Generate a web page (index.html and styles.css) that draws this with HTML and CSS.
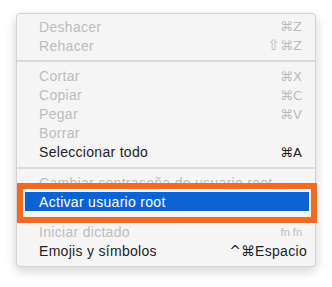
FILE: index.html
```html
<!DOCTYPE html>
<html>

<head>
    <link rel="stylesheet" href="styles.css">
</head>

<body>
    <div class="stage">
        <div class="menu">
            <div class="item disabled"><span>Deshacer</span><span class="key">⌘Z</span></div>
            <div class="item disabled"><span>Rehacer</span><span class="key"><span class="shift">⇧</span>⌘Z</span></div>
            <div class="sep"></div>
            <div class="item disabled"><span>Cortar</span><span class="key">⌘X</span></div>
            <div class="item disabled"><span>Copiar</span><span class="key">⌘C</span></div>
            <div class="item disabled"><span>Pegar</span><span class="key">⌘V</span></div>
            <div class="item disabled"><span>Borrar</span></div>
            <div class="item"><span>Seleccionar todo</span><span class="key">⌘A</span></div>
            <div class="sep"></div>
            <div class="item disabled"><span>Cambiar contraseña de usuario root...</span></div>
            <div class="item active"><span>Activar usuario root</span></div>
            <div class="sep"></div>
            <div class="item disabled"><span>Iniciar dictado</span><span class="key small">fn fn</span></div>
            <div class="item"><span>Emojis y símbolos</span><span class="key wide">^⌘<span class="word">Espacio</span></span></div>
        </div>
        <div class="callout"></div>
    </div>
</body>

</html>
```

FILE: styles.css
```css
body {
    margin: 0;
    background: #ffffff;
    font-family: 'Liberation Sans', Arial, sans-serif;
}

.stage {
    position: relative;
    width: 332px;
    height: 287px;
    padding: 13px 0 0 16px;
    box-sizing: border-box;
}

.menu {
    width: 300px;
    box-sizing: border-box;
    background: #f5f5f5;
    border: 1px solid #d2d2d2;
    border-radius: 4px;
    padding: 3px 0 5px;
    box-shadow: 0 4px 12px rgba(0, 0, 0, 0.18);
}

.item {
    display: flex;
    justify-content: space-between;
    align-items: center;
    height: 19px;
    padding: 0 13px 0 22px;
    font-size: 14px;
    letter-spacing: 0.3px;
    color: #222222;
    white-space: nowrap;
    overflow: hidden;
}

.item.disabled {
    color: #bdbdbd;
}

.item.active {
    background: #0b63d6;
    color: #ffffff;
}

.key {
    font-family: 'DejaVu Sans', 'Liberation Sans', sans-serif;
    font-size: 13px;
    letter-spacing: 0;
}

.key .shift {
    font-size: 15px;
    line-height: 1;
}

.key.small {
    font-family: 'Liberation Sans', sans-serif;
    font-size: 11px;
}

.key.wide {
    margin-right: -5px;
    font-size: 14px;
}

.key .word {
    font-family: 'Liberation Sans', sans-serif;
    letter-spacing: 0.3px;
}

.sep {
    height: 2px;
    margin: 5px 0 4.5px;
    background: #dcdcdc;
}

.callout {
    position: absolute;
    left: 17px;
    top: 183px;
    width: 300px;
    height: 40px;
    box-sizing: border-box;
    border: 6px solid #f06a24;
    box-shadow: inset 0 0 0 2px #f4f4f4;
}
```
